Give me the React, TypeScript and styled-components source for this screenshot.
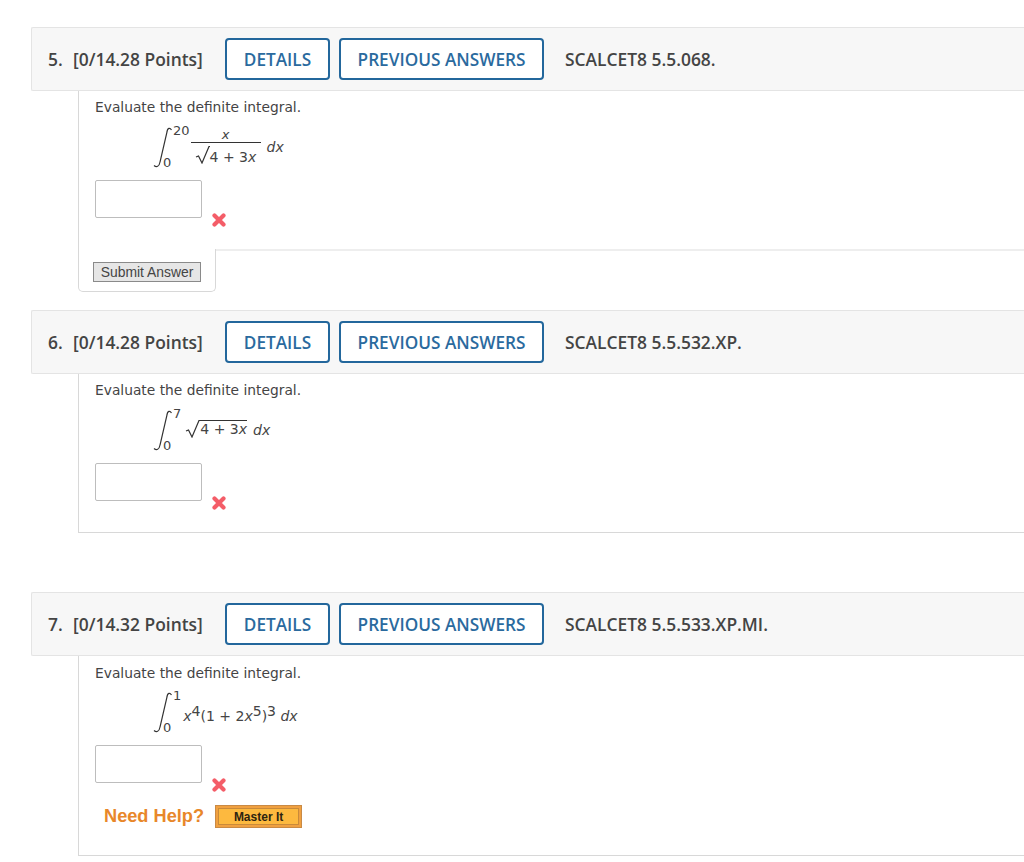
import { ReactNode } from "react";
import styled, { createGlobalStyle } from "styled-components";

const GlobalStyle = createGlobalStyle`
  html, body { margin: 0; padding: 0; background: #fff; overflow: hidden; }
  body { font-family: "Open Sans", "Liberation Sans", sans-serif; color: #444; }
`;

/* ── Layout ──────────────────────────────────────────── */

const Page = styled.div`
  width: 1024px;
  height: 862px;
  padding: 27px 0 0 31px;
  box-sizing: border-box;
  overflow: hidden;
  display: flex;
  flex-direction: column;
`;

const Question = styled.section<{ $gap: number }>`
  display: flex;
  flex-direction: column;
  margin-bottom: ${(p) => p.$gap}px;
`;

const Header = styled.header`
  height: 64px;
  flex: none;
  box-sizing: border-box;
  display: flex;
  align-items: center;
  padding-left: 16px;
  background: #f7f7f7;
  border: 1px solid #e4e4e4;
  border-right: none;
  border-radius: 2px 0 0 2px;
`;

const Number = styled.span`
  width: 25px;
  font-size: 17.4px;
  font-weight: 600;
  color: #444;
`;

const Points = styled.span`
  width: 152px;
  font-size: 17.4px;
  font-weight: 600;
  white-space: nowrap;
  color: #444;
`;

const HeaderButton = styled.button<{ $w: number }>`
  width: ${(p) => p.$w}px;
  height: 42px;
  margin-right: 9px;
  padding: 0;
  background: #fff;
  border: 2px solid #23679c;
  border-radius: 4px;
  font-family: inherit;
  font-size: 17.2px;
  font-weight: 600;
  white-space: nowrap;
  color: #2a6a9e;
`;

const Code = styled.span`
  margin-left: 12px;
  font-size: 17.4px;
  font-weight: 600;
  color: #444;
`;

/* ── Body ────────────────────────────────────────────── */

const Body = styled.div<{ $h: number; $closed: boolean }>`
  margin-left: 47px;
  height: ${(p) => p.$h}px;
  box-sizing: border-box;
  padding: 7px 0 0 16px;
  border-left: 1px solid #d8d8d8;
  border-bottom: ${(p) => (p.$closed ? "1px solid #d8d8d8" : "none")};
`;

const Prompt = styled.p<{ $dy: number }>`
  margin: ${(p) => p.$dy}px 0 ${(p) => -p.$dy}px;
  font-family: "DejaVu Sans", Verdana, sans-serif;
  font-size: 13.8px;
  line-height: 18px;
  color: #444;
`;

const MathRow = styled.div`
  margin: 8px 0 10px 58px;
  height: 46px;
  display: flex;
  align-items: center;
  font-family: "DejaVu Sans", Verdana, sans-serif;
  font-size: 14px;
  color: #444;
`;

const IntegralSvg = styled.svg`
  flex: none;
  align-self: flex-start;
  margin-top: 3px;
`;

const Limits = styled.div`
  align-self: stretch;
  display: flex;
  flex-direction: column;
  justify-content: space-between;
  margin-left: 1px;
  font-size: 13px;
  line-height: 14px;
`;

const LowerLimit = styled.span`
  margin-left: -10px;
`;

const Fraction = styled.span`
  align-self: flex-start;
  width: 70px;
  flex: none;
  display: flex;
  flex-direction: column;
  margin: 0 6px 0 1px;
`;

const Numer = styled.span`
  padding-top: 3px;
  text-align: center;
  font-size: 13px;
  line-height: 15px;
  border-bottom: 1px solid #333;
`;

const Denom = styled.span`
  height: 21px;
  display: flex;
  align-items: flex-end;
  padding-left: 4px;
`;

const DenomText = styled.span`
  line-height: 14px;
`;

const Root = styled.span`
  display: inline-flex;
  align-items: flex-end;
  margin: 0 6px 2px 4px;
`;

const RootText = styled.span`
  line-height: 17px;
  border-top: 1px solid #333;
`;

const Var = styled.i`
  font-style: italic;
`;

const Expression = styled.span`
  margin: 8px 0 0 2px;
  white-space: nowrap;
`;

const Sup = styled.sup`
  font-size: 14px;
  line-height: 0;
  vertical-align: 5px;
`;

const AnswerRow = styled.div`
  display: flex;
  align-items: flex-end;
  gap: 10px;
`;

const Answer = styled.div`
  width: 107px;
  height: 38px;
  box-sizing: border-box;
  border: 1px solid #bdbdbd;
  border-radius: 2px;
  background: #fff;
`;

const Wrong = styled.svg`
  width: 14px;
  height: 14px;
  margin-bottom: -9px;
  display: block;
`;

const HelpRow = styled.div`
  display: flex;
  align-items: center;
  margin: 22px 0 0 9px;
`;

const HelpLabel = styled.span`
  font-family: "Liberation Sans", Arial, sans-serif;
  font-size: 18.2px;
  font-weight: 700;
  color: #e8872a;
`;

const MasterIt = styled.button`
  margin-left: 11px;
  width: 87px;
  height: 23px;
  padding: 0;
  box-sizing: border-box;
  background: #fdb93f;
  border: 1px solid #c98a45;
  box-shadow: inset 0 0 0 2px #f0a040, inset 0 0 0 3px #c98a3a;
  font-family: "Liberation Sans", Arial, sans-serif;
  font-size: 12px;
  font-weight: 700;
  color: #2e2410;
`;

const Footer = styled.div`
  display: flex;
  margin-left: 47px;
  height: 43px;
`;

const SubmitTab = styled.div`
  width: 138px;
  box-sizing: border-box;
  padding: 13px 0 0 14px;
  border: 1px solid #d8d8d8;
  border-top: none;
  border-radius: 0 0 5px 5px;
`;

const SubmitButton = styled.button`
  display: block;
  width: 108px;
  height: 20px;
  padding: 0;
  box-sizing: border-box;
  background: #e6e6e6;
  border: 1px solid #8a8a8a;
  font-family: "Liberation Sans", Arial, sans-serif;
  font-size: 13.9px;
  color: #444;
`;

const FooterRule = styled.div`
  flex: 1;
  border-top: 2px solid #eeeeee;
`;

/* ── Drawings ────────────────────────────────────────── */

const IntegralSign = () => (
  <IntegralSvg width="19" height="41" viewBox="0 0 19 41" fill="none">
    <path d="M18.5 3 C17 0.5 14.5 0.5 14 5 L7 35 C6.2 39.8 3.5 40.5 1 38.5" stroke="#333" strokeWidth="1.2" />
  </IntegralSvg>
);

const RadicalSign = () => (
  <svg width="15" height="18" viewBox="0 0 15 18" fill="none">
    <path d="M1 11 L3.5 10 L7 17 L14 0.5 L15 0.5" stroke="#333" strokeWidth="1.2" />
  </svg>
);

const WrongMark = () => (
  <Wrong viewBox="0 0 14 14">
    <path d="M2.5 2.5 L11.5 11.5 M11.5 2.5 L2.5 11.5" stroke="#f45d68" strokeWidth="4.2" strokeLinecap="round" />
  </Wrong>
);

/* ── Data ────────────────────────────────────────────── */

interface Item {
  num: string;
  points: string;
  code: string;
  upper: string;
  height: number;
  gap: number;
  promptDy: number;
  expr: ReactNode;
  footer?: boolean;
  help?: boolean;
}

const ITEMS: Item[] = [
  {
    num: "5.",
    points: "[0/14.28 Points]",
    code: "SCALCET8 5.5.068.",
    upper: "20",
    height: 158,
    gap: 18,
    promptDy: 0,
    footer: true,
    expr: (
      <>
        <Fraction>
          <Numer><Var>x</Var></Numer>
          <Denom>
            <RadicalSign />
            <DenomText>4 + 3<Var>x</Var></DenomText>
          </Denom>
        </Fraction>
        <Var>dx</Var>
      </>
    ),
  },
  {
    num: "6.",
    points: "[0/14.28 Points]",
    code: "SCALCET8 5.5.532.XP.",
    upper: "7",
    height: 159,
    gap: 59,
    promptDy: 0,
    expr: (
      <>
        <Root>
          <RadicalSign />
          <RootText>4 + 3<Var>x</Var></RootText>
        </Root>
        <Var>dx</Var>
      </>
    ),
  },
  {
    num: "7.",
    points: "[0/14.32 Points]",
    code: "SCALCET8 5.5.533.XP.MI.",
    upper: "1",
    height: 200,
    gap: 0,
    promptDy: 1,
    help: true,
    expr: (
      <Expression>
        <Var>x</Var><Sup>4</Sup>(1 + 2<Var>x</Var><Sup>5</Sup>)<Sup>3</Sup> <Var>dx</Var>
      </Expression>
    ),
  },
];

/* ── Page ────────────────────────────────────────────── */

export default function App() {
  return (
    <>
      <GlobalStyle />
      <Page>
        {ITEMS.map((q) => (
          <Question key={q.num} $gap={q.gap}>
            <Header>
              <Number>{q.num}</Number>
              <Points>{q.points}</Points>
              <HeaderButton $w={105}>DETAILS</HeaderButton>
              <HeaderButton $w={205}>PREVIOUS ANSWERS</HeaderButton>
              <Code>{q.code}</Code>
            </Header>
            <Body $h={q.height} $closed={!q.footer}>
              <Prompt $dy={q.promptDy}>Evaluate the definite integral.</Prompt>
              <MathRow>
                <IntegralSign />
                <Limits>
                  <span>{q.upper}</span>
                  <LowerLimit>0</LowerLimit>
                </Limits>
                {q.expr}
              </MathRow>
              <AnswerRow>
                <Answer />
                <WrongMark />
              </AnswerRow>
              {q.help && (
                <HelpRow>
                  <HelpLabel>Need Help?</HelpLabel>
                  <MasterIt>Master It</MasterIt>
                </HelpRow>
              )}
            </Body>
            {q.footer && (
              <Footer>
                <SubmitTab>
                  <SubmitButton>Submit Answer</SubmitButton>
                </SubmitTab>
                <FooterRule />
              </Footer>
            )}
          </Question>
        ))}
      </Page>
    </>
  );
}
